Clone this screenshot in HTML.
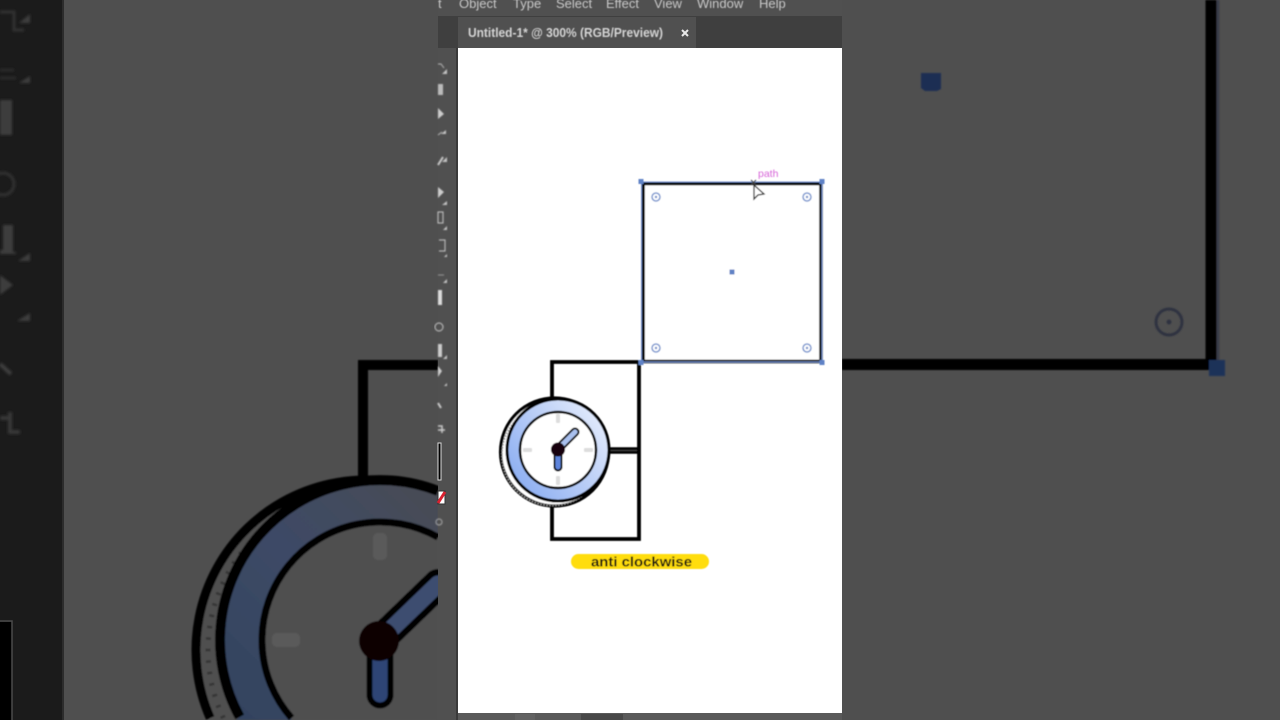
<!DOCTYPE html>
<html><head><meta charset="utf-8"><style>
html,body{margin:0;padding:0;background:#4f4f4f;width:1280px;height:720px;overflow:hidden}
svg{position:absolute;left:0;top:0;display:block}
text{font-family:"Liberation Sans",sans-serif}
</style></head><body>
<svg width="1280" height="720" viewBox="0 0 1280 720" xmlns="http://www.w3.org/2000/svg">
<defs>
<linearGradient id="g" x1="0.1" y1="0.8" x2="0.9" y2="0.2"><stop offset="0" stop-color="#8fb0f2"/><stop offset="1" stop-color="#dfe8fb"/></linearGradient>
<linearGradient id="gd" gradientUnits="userSpaceOnUse" x1="230" y1="700" x2="438" y2="490"><stop offset="0" stop-color="#33435f"/><stop offset="0.5" stop-color="#3d4a66"/><stop offset="1" stop-color="#484b54"/></linearGradient>
<filter id="b" x="-10%" y="-10%" width="120%" height="120%"><feGaussianBlur stdDeviation="0.8"/></filter>
<filter id="b2" x="-10%" y="-10%" width="120%" height="120%"><feGaussianBlur stdDeviation="1.2"/></filter>
<filter id="s" x="-5%" y="-5%" width="110%" height="110%"><feGaussianBlur stdDeviation="0.4"/></filter>
<filter id="t" x="-5%" y="-5%" width="110%" height="110%"><feGaussianBlur stdDeviation="0.8"/></filter>
</defs>
<!-- left dimmed side -->
<rect width="438" height="720" fill="#4f4f4f"/>
<rect width="62" height="720" fill="#1b1b1b"/>
<rect x="62" width="2" height="720" fill="#2c2c2c"/>
<g filter="url(#b2)" fill="#3c3c3c">
<path d="M0 12H14V30H24" fill="none" stroke="#333" stroke-width="3"/>
<path d="M30 14V23H19Z"/><path d="M30 76V83H19Z"/>
<path d="M0 70H14M0 78H16" stroke="#333" stroke-width="2"/>
<rect x="0" y="100" width="12" height="35"/>
<circle cx="3" cy="184" r="11" fill="none" stroke="#333" stroke-width="3"/>
<path d="M3 225H13V252H16V254H0V250H3Z"/>
<path d="M30 253V261H18Z"/>
<path d="M0 275L13 285L0 295Z"/><path d="M30 313V321H17Z"/>
<path d="M0 364L11 374" stroke="#3c3c3c" stroke-width="4"/>
<path d="M0 418H10V432H20M10 425V412" fill="none" stroke="#383838" stroke-width="4"/>
</g>
<rect x="0" y="622" width="12" height="98" fill="#000"/>
<path d="M0 621H12V720" fill="none" stroke="#4a4a4a" stroke-width="1.500"/>
<!-- bg clock -->
<g filter="url(#b)">
<path d="M363 479V365H438" fill="none" stroke="#000" stroke-width="10"/>
<path d="M210.200 718A170 170 0 0 1 438 496V720H210Z" fill="#4f4f4f"/>
<path d="M210.200 718A170 170 0 0 1 438 496" fill="none" stroke="#000" stroke-width="9"/>
<path d="M223.400 718A158 158 0 0 1 263.200 530" fill="none" stroke="#343434" stroke-width="5" stroke-dasharray="2.500 9"/>
<path d="M239.700 717A160 160 0 0 1 438 491V720H236Z" fill="url(#gd)"/>
<path d="M239.700 717A160 160 0 0 1 438 491" fill="none" stroke="#000" stroke-width="10"/>
<path d="M291.500 718A118 118 0 0 1 438 537.200V720H291Z" fill="#4f4f4f"/>
<path d="M291.500 718A118 118 0 0 1 438 537.200" fill="none" stroke="#000" stroke-width="7"/>
<rect x="373" y="533" width="14" height="27" rx="5" fill="#5a5a5a"/>
<rect x="272" y="633" width="28" height="14" rx="5" fill="#5a5a5a"/>
<path d="M380 640L438 584" stroke="#000" stroke-width="30" stroke-linecap="round"/>
<path d="M380 640L438 584" stroke="#3e4d70" stroke-width="17" stroke-linecap="round"/>
<path d="M380 640V695" stroke="#000" stroke-width="27" stroke-linecap="round"/>
<path d="M380 640V695" stroke="#2d4474" stroke-width="15" stroke-linecap="round"/>
<circle cx="379" cy="641" r="20" fill="#0a0204"/>
</g>
<!-- right dimmed side -->
<rect x="842" width="438" height="720" fill="#4f4f4f"/>
<g filter="url(#b)">
<path d="M842 364.500H1211V0" fill="none" stroke="#000" stroke-width="11"/>
<path d="M1218 0V366" stroke="#2c3344" stroke-width="3" opacity=".6"/>
<rect x="1209" y="360" width="16" height="16" fill="#1f3058"/>
<path d="M921 73H941V89L937 91H925L921 88Z" fill="#1d2d52"/>
<circle cx="1169" cy="322" r="13" fill="none" stroke="#2f3340" stroke-width="3"/>
<circle cx="1169" cy="322" r="2.500" fill="#2f3340"/>
</g>
<!-- center app -->
<rect x="438" width="404" height="720" fill="#4c4c4c"/>
<rect x="438" y="0" width="404" height="16" fill="#505050"/>
<rect x="438" y="16" width="404" height="32" fill="#3f3f3f"/>
<rect x="458" y="17" width="238" height="31" fill="#505050"/>
<rect x="438" y="48" width="18" height="672" fill="#505050"/>
<rect x="456" y="48" width="2" height="672" fill="#3a3a3a"/>
<g fill="#c8c8c8" font-size="13" filter="url(#s)">
<text x="438" y="8">t</text>
<text x="459" y="8">Object</text>
<text x="513" y="8">Type</text>
<text x="556" y="8">Select</text>
<text x="606" y="8">Effect</text>
<text x="654" y="8">View</text>
<text x="697" y="8">Window</text>
<text x="759" y="8">Help</text>
</g>
<text x="468" y="37" font-size="12.500" font-weight="bold" fill="#d4d4d4" textLength="195" lengthAdjust="spacingAndGlyphs" filter="url(#s)">Untitled-1* @ 300% (RGB/Preview)</text>
<path d="M682 30L688 36M688 30L682 36" stroke="#e8e8e8" stroke-width="2"/>
<!-- toolbar -->
<g filter="url(#t)" fill="#c4c4c4">
<path d="M438 64H441L444 68" fill="none" stroke="#bbb"/><path d="M447 69V74H442Z"/><path d="M438 84H443V95H438Z" fill="#bbb"/>
<path d="M438 108L444 114L438 119Z" fill="#ccc"/>
<path d="M438 135L442 132" stroke="#bbb"/><path d="M446 130V134H441Z"/><path d="M438 165L443 157" stroke="#ccc" stroke-width="2"/><path d="M447 157V162H442Z"/>
<path d="M438 187L444 192L438 198Z" fill="#ccc"/><path d="M447 201V205H442Z"/>
<rect x="438" y="212" width="5" height="11" fill="none" stroke="#ccc"/><path d="M447 226V230H443Z"/>
<path d="M439 240H445V251H439" fill="none" stroke="#ccc"/><path d="M447 254V257H444Z"/>
<path d="M438 275H444" stroke="#999"/><path d="M447 279V283H443Z"/>
<rect x="438" y="290" width="4" height="15" fill="#ddd"/>
<circle cx="439" cy="327" r="4" fill="none" stroke="#ccc"/>
<rect x="438" y="344" width="4" height="13" fill="#ccc"/><path d="M447 355V359H443Z"/>
<path d="M438 366L442 371L438 377Z" fill="#ccc"/><path d="M447 383V386H444Z"/>
<path d="M438 403L441 408" stroke="#ccc" stroke-width="2"/>
<path d="M438 426H442V433M438 430H445" fill="none" stroke="#ccc" stroke-width="1.500"/>
<circle cx="439" cy="522" r="3" fill="none" stroke="#aaa"/>
</g>
<rect x="438" y="443" width="3" height="37" fill="#000" stroke="#ddd" stroke-width="1"/>
<rect x="438" y="491" width="7" height="13" fill="#fff" stroke="#333"/>
<path d="M438 503L445 492" stroke="#d8202f" stroke-width="3"/>
<!-- canvas -->
<rect x="458" y="48" width="384" height="665" fill="#fff"/>
<rect x="458" y="713" width="384" height="7" fill="#5a5a5a"/>
<rect x="515" y="714" width="20" height="6" fill="#626262"/>
<rect x="581" y="714" width="42" height="6" fill="#484848"/>
<g filter="url(#s)">
<!-- small rect + clock -->
<path d="M552 398V362H639V539H552V505" fill="none" stroke="#000" stroke-width="3.800"/>
<path d="M608 450.500H639" stroke="#000" stroke-width="6.500"/>
<path d="M610 450.500H637" stroke="#555" stroke-width="0.800"/>
<circle cx="554.500" cy="452" r="54" fill="#fff" stroke="#000" stroke-width="3.200"/>
<circle cx="552.500" cy="455" r="50.500" fill="none" stroke="#999" stroke-width="1.500" stroke-dasharray="1.500 1.500"/>
<circle cx="558" cy="450" r="51" fill="url(#g)" stroke="#000" stroke-width="3"/>
<circle cx="558" cy="450" r="38" fill="#fff" stroke="#000" stroke-width="2.500"/>
<rect x="556" y="414" width="4" height="9" rx="1" fill="#ddd"/>
<rect x="556" y="476" width="4" height="9" rx="1" fill="#ddd"/>
<rect x="523" y="448" width="9" height="4" rx="1" fill="#ddd"/>
<rect x="584" y="448" width="9" height="4" rx="1" fill="#ddd"/>
<path d="M558 449L575 432" stroke="#000" stroke-width="9" stroke-linecap="round"/>
<path d="M558 449L575 432" stroke="#a9c0ee" stroke-width="5" stroke-linecap="round"/>
<path d="M558 450V467" stroke="#000" stroke-width="9" stroke-linecap="round"/>
<path d="M558 450V467" stroke="#5d84dc" stroke-width="5" stroke-linecap="round"/>
<circle cx="558" cy="449.500" r="7" fill="#140608"/>
<!-- selected square -->
<rect x="643" y="183.500" width="178" height="178" fill="#fff" stroke="#000" stroke-width="3.500"/>
<path d="M641.500 182H822V362H641.500Z" fill="none" stroke="#6f8cc8" stroke-width="1"/>
<g fill="#5f82c6">
<rect x="638.500" y="179" width="5" height="5"/><rect x="819.500" y="179" width="5" height="5"/>
<rect x="638.500" y="360" width="5" height="5"/><rect x="819.500" y="360" width="5" height="5"/>
<rect x="729.500" y="269.500" width="5" height="5"/>
</g>
<g fill="none" stroke="#7f9ad0" stroke-width="1.500">
<circle cx="656" cy="197" r="4"/><circle cx="807" cy="197" r="4"/><circle cx="656" cy="348" r="4"/><circle cx="807" cy="348" r="4"/>
</g>
<g fill="#6f8cc8">
<circle cx="656" cy="197" r="1.200"/><circle cx="807" cy="197" r="1.200"/><circle cx="656" cy="348" r="1.200"/><circle cx="807" cy="348" r="1.200"/>
</g>
<text x="758" y="177" font-size="10.500" fill="#d765d8">path</text>
<path d="M754 185V199L758 195L764 194Z" fill="#fff" stroke="#333" stroke-width="1.300"/>
<path d="M751 180L756 185M756 180L751 185" stroke="#444" stroke-width="1"/>
<rect x="571" y="554" width="138" height="15" rx="7.500" fill="#ffdd0d"/>
<text x="591" y="566.500" font-size="13.500" font-weight="bold" fill="#111" textLength="101" lengthAdjust="spacingAndGlyphs">anti clockwise</text>
</g>
</svg>
</body></html>
